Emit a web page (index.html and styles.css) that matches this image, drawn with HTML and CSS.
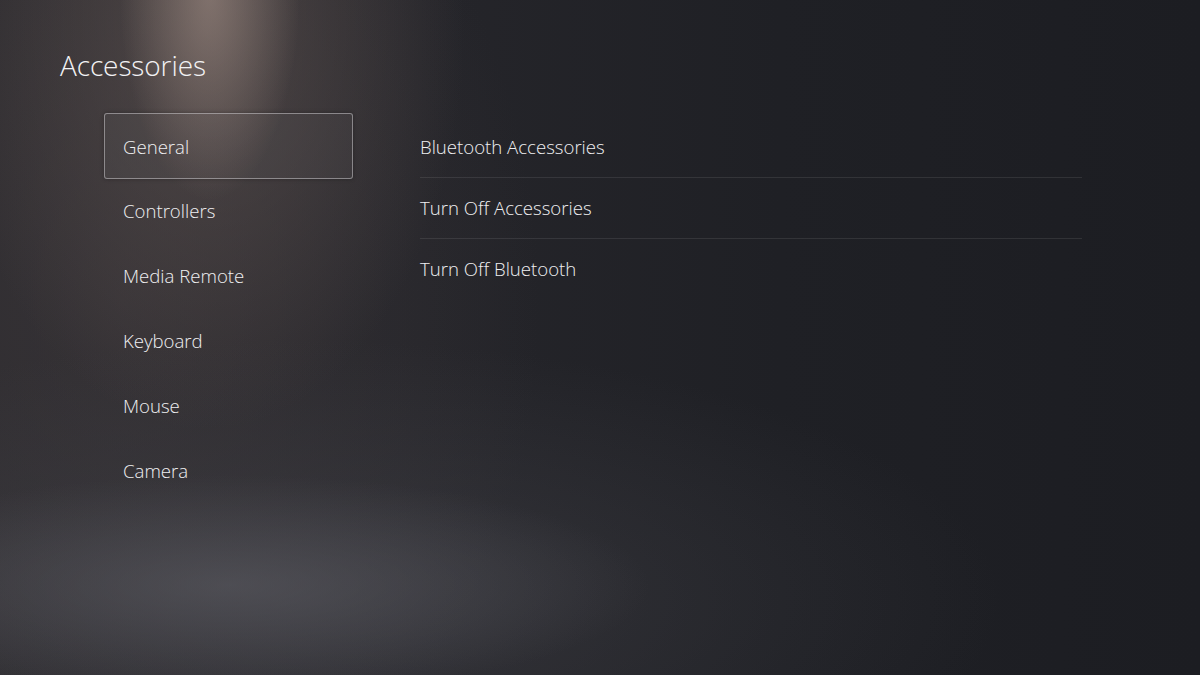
FILE: index.html
```html
<!DOCTYPE html>
<html lang="en">
<head>
<meta charset="utf-8">
<title>Accessories</title>
<link rel="stylesheet" href="styles.css">
</head>
<body>
<div class="screen">
  <h1 class="title">Accessories</h1>
  <div class="content">
    <nav class="menu">
      <div class="menu-item selected">General</div>
      <div class="menu-item">Controllers</div>
      <div class="menu-item">Media Remote</div>
      <div class="menu-item">Keyboard</div>
      <div class="menu-item">Mouse</div>
      <div class="menu-item">Camera</div>
    </nav>
    <div class="options">
      <div class="option">Bluetooth Accessories</div>
      <div class="option">Turn Off Accessories</div>
      <div class="option">Turn Off Bluetooth</div>
    </div>
  </div>
</div>
</body>
</html>
```
FILE: styles.css
```css
html, body {
  margin: 0;
  padding: 0;
}
body {
  width: 1200px;
  height: 675px;
  overflow: hidden;
  font-family: "Open Sans", "Noto Sans", sans-serif;
  color: #f0f0f2;
}
.screen {
  width: 1200px;
  height: 675px;
  box-sizing: border-box;
  padding: 46px 0 0 60px;
  background:
    radial-gradient(ellipse 90px 210px at 210px -10px, rgba(165,145,136,0.6), rgba(165,145,136,0) 100%),
    radial-gradient(ellipse 260px 400px at 205px 30px, rgba(110,96,92,0.5), rgba(110,96,92,0) 100%),
    radial-gradient(ellipse 420px 110px at 230px 585px, rgba(95,95,102,0.55), rgba(95,95,102,0) 100%),
    radial-gradient(ellipse 700px 260px at 300px 600px, rgba(70,70,76,0.5), rgba(70,70,76,0) 100%),
    radial-gradient(ellipse 420px 560px at 120px 300px, rgba(60,55,58,0.65), rgba(60,55,58,0) 100%),
    linear-gradient(90deg, #2a292d 0%, #25252a 35%, #1f2025 65%, #1c1d22 100%);
}
.title {
  margin: 0;
  font-size: 28px;
  font-weight: 300;
  line-height: 38px;
  letter-spacing: -0.1px;
  color: #f2f2f4;
}
.content {
  display: flex;
  margin-top: 29px;
  padding-left: 44px;
}
.menu {
  width: 249px;
  display: flex;
  flex-direction: column;
}
.menu-item {
  height: 65px;
  box-sizing: border-box;
  display: flex;
  align-items: center;
  padding-left: 18px;
  font-size: 18.6px;
  font-weight: 300;
  border: 1px solid transparent;
}
.menu-item.selected {
  height: 66px;
  border: 1.5px solid rgba(200,198,202,0.55);
  border-radius: 3px;
  background: rgba(255,255,255,0.03);
  box-shadow: 0 0 4px rgba(0,0,0,0.3);
  margin-bottom: -1px;
}
.options {
  margin-left: 67px;
  width: 662px;
  display: flex;
  flex-direction: column;
  padding-top: 4px;
}
.option {
  height: 61px;
  box-sizing: border-box;
  display: flex;
  align-items: center;
  padding-bottom: 2px;
  font-size: 18.6px;
  font-weight: 300;
  border-bottom: 1px solid rgba(255,255,255,0.09);
}
.option:last-child {
  border-bottom: none;
}
```
